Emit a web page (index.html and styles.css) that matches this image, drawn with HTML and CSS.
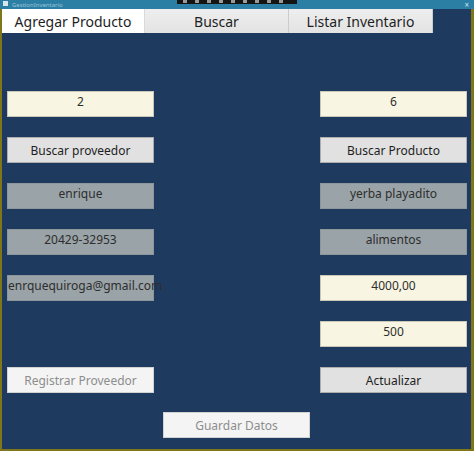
FILE: index.html
```html
<!DOCTYPE html>
<html lang="es">
<head>
<meta charset="utf-8">
<title>GestionInventario</title>
<link rel="stylesheet" href="styles.css">
</head>
<body>
<div class="window">
  <div class="titlebar">
    <span class="app-icon"></span>
    <span class="title">GestionInventario</span>
    <span class="close">×</span>
    <div class="capture-bar">
      <span></span><span></span><span></span><span></span><span></span><span></span><span></span><span></span><span></span>
    </div>
  </div>
  <div class="frame">
    <div class="tabs">
      <div class="tab active">Agregar Producto</div>
      <div class="tab">Buscar</div>
      <div class="tab">Listar Inventario</div>
    </div>
    <div class="content">
      <div class="cols">
        <div class="col">
          <div class="field input">2</div>
          <div class="field button">Buscar proveedor</div>
          <div class="field readonly">enrique</div>
          <div class="field readonly">20429-32953</div>
          <div class="field readonly">enrquequiroga@gmail.com</div>
          <div class="field spacer"></div>
          <div class="field button disabled">Registrar Proveedor</div>
        </div>
        <div class="col">
          <div class="field input">6</div>
          <div class="field button">Buscar Producto</div>
          <div class="field readonly">yerba playadito</div>
          <div class="field readonly">alimentos</div>
          <div class="field input">4000,00</div>
          <div class="field input">500</div>
          <div class="field button">Actualizar</div>
        </div>
      </div>
      <div class="footer">
        <div class="field button disabled">Guardar Datos</div>
      </div>
    </div>
  </div>
</div>
</body>
</html>
```
FILE: styles.css
```css
html, body {
  margin: 0;
  padding: 0;
  background: #1e3a5f;
}
.window {
  width: 474px;
  height: 451px;
  display: flex;
  flex-direction: column;
  font-family: "Noto Sans", "Open Sans", sans-serif;
  overflow: hidden;
}
.titlebar {
  position: relative;
  height: 9px;
  flex: none;
  background: #2b7ea4;
  display: flex;
  align-items: center;
  overflow: hidden;
}
.app-icon {
  width: 5px;
  height: 5px;
  margin: 0 0 2px 3px;
  background: #d8e6ee;
}
.title {
  font-size: 6px;
  line-height: 8px;
  color: #9cc4d8;
  margin-left: 4px;
}
.close {
  margin-left: auto;
  margin-right: 5px;
  font-size: 8px;
  line-height: 9px;
  color: #cfe3ee;
}
.capture-bar {
  position: absolute;
  left: 177px;
  top: 0;
  width: 120px;
  height: 4px;
  background: #141414;
  display: flex;
  gap: 8px;
  padding-left: 6px;
  box-sizing: border-box;
}
.capture-bar span {
  width: 4px;
  height: 3px;
  background: #9a9a9a;
}
.frame {
  flex: 1;
  display: flex;
  flex-direction: column;
  border-left: 2px solid #7f7519;
  border-right: 3px solid #7f7519;
  border-bottom: 2px solid #7f7519;
  background: #1e3a5f;
}
.tabs {
  display: flex;
  height: 24px;
  flex: none;
}
.tab {
  width: 144px;
  box-sizing: border-box;
  background: linear-gradient(#eeeeee, #e3e3e3);
  border-right: 1px solid #cccccc;
  color: #1e1e1e;
  font-size: 14px;
  line-height: 25px;
  text-align: center;
}
.tab.active {
  width: 143px;
  background: #ffffff;
  border-right: 1px solid #d9d9d9;
}
.content {
  flex: 1;
  padding: 58px 4px 0 5px;
  display: flex;
  flex-direction: column;
}
.cols {
  display: flex;
  justify-content: space-between;
}
.col {
  display: flex;
  flex-direction: column;
  gap: 20px;
}
.field {
  width: 147px;
  height: 26px;
  box-sizing: border-box;
  font-size: 12px;
  text-align: center;
  color: #2e2e2e;
  white-space: nowrap;
  overflow: visible;
}
.input {
  background: #f8f6e2;
  border: 1px solid #c9c8b8;
  line-height: 19px;
}
.readonly {
  background: #9aa3a7;
  border: 1px solid #8c969b;
  line-height: 19px;
}
.button {
  background: #e1e1e1;
  border: 1px solid #adadad;
  line-height: 25px;
  color: #1e1e1e;
}
.button.disabled {
  background: #f4f4f4;
  border-color: #d2d2d2;
  color: #8d8d8d;
}
.spacer {
  visibility: hidden;
}
.footer {
  display: flex;
  justify-content: center;
  margin-top: 19px;
  padding-right: 1px;
}
```
